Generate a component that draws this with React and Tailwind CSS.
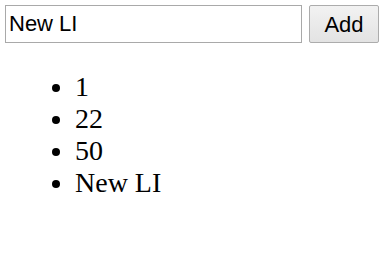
import React from "react";

export default function App() {
  const items = ["1", "22", "50", "New LI"];
  return (
    <div className="p-[5px] bg-white min-h-[278px]">
      <div className="flex items-start gap-[7px] font-['Liberation_Sans',Arial,sans-serif]">
        <input
          type="text"
          defaultValue="New LI"
          className="w-[297px] h-[38px] border border-[#a9a9a9] px-[3px] text-[22px] text-black outline-none"
        />
        <button className="w-[70px] h-[38px] border border-[#acacac] rounded-[2px] bg-gradient-to-b from-[#f2f2f2] to-[#e3e3e3] text-[22px] text-black">
          Add
        </button>
      </div>
      <ul className="list-disc mt-[28px] pl-[70px] text-[28px] text-black leading-[32px] font-['Liberation_Serif','Times_New_Roman',serif]">
        {items.map((it, i) => (
          <li key={i}>{it}</li>
        ))}
      </ul>
    </div>
  );
}
